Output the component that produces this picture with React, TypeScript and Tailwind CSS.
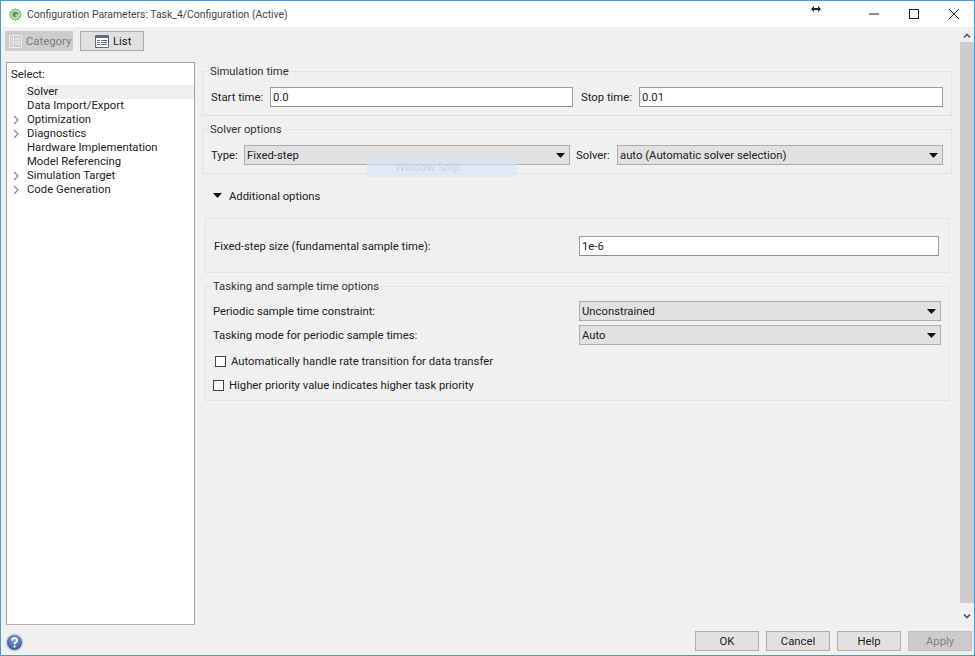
import React from "react";

const Chevron = () => (
  <svg className="w-[6px] h-[10px]" viewBox="0 0 6 10" fill="none" stroke="#8a8a8a" strokeWidth={1.2}>
    <path d="M1 1l4 4-4 4" />
  </svg>
);

const DropArrow = () => (
  <svg className="w-[9px] h-[5px]" viewBox="0 0 9 5" fill="#111">
    <path d="M0 0h9L4.5 5z" />
  </svg>
);

const treeItems = [
  { label: "Solver", selected: true },
  { label: "Data Import/Export" },
  { label: "Optimization", expand: true },
  { label: "Diagnostics", expand: true },
  { label: "Hardware Implementation" },
  { label: "Model Referencing" },
  { label: "Simulation Target", expand: true },
  { label: "Code Generation", expand: true },
];

const TextBox = ({ value, className }: { value: string; className: string }) => (
  <div className={`h-5 bg-white border border-[#a0a0a0] border-b-[#8c8c8c] flex items-center pl-[2px] text-[#222] ${className}`}>
    <span className="pt-[2px]">{value}</span>
  </div>
);

const Select = ({ value, className }: { value: string; className: string }) => (
  <div className={`h-5 bg-[#e1e1e1] border border-[#adadad] flex items-center justify-between pl-[2px] pr-[4px] text-[#222] ${className}`}>
    <span className="pt-[2px]">{value}</span>
    <DropArrow />
  </div>
);

const Button = ({ label, disabled }: { label: string; disabled?: boolean }) => (
  <div
    className={`w-16 h-5 flex items-center justify-center border pt-[2px] ${
      disabled ? "bg-[#cccccc] border-[#bfbfbf] text-[#838383]" : "bg-[#e1e1e1] border-[#adadad] text-[#222]"
    }`}
  >
    {label}
  </div>
);

const Checkbox = ({ label, className }: { label: string; className: string }) => (
  <div className={`flex items-center gap-[5px] ${className}`}>
    <div className="w-[11px] h-[11px] bg-white border border-[#444]" />
    <span className="pt-[2px]">{label}</span>
  </div>
);

export default function App() {
  return (
    <div
      className="relative w-[975px] h-[656px] overflow-hidden flex flex-col bg-[#f0f0f0] border border-[#4a9bd0] text-[11.3px] leading-4 text-[#222]"
      style={{ fontFamily: 'Roboto, sans-serif' }}
    >
      {/* Title bar */}
      <div className="h-[26px] shrink-0 bg-white flex items-center pl-2 pr-[15px]">
        <svg className="w-[13px] h-[13px] shrink-0" viewBox="0 0 13 13">
          <path d="M6.5 0l1.3 1.6 2-.6.5 2 2 .6-.6 2L13 6.5l-1.3 1.3.6 2-2 .5-.5 2-2-.5L6.5 13l-1.3-1.2-2 .5-.5-2-2-.5.6-2L0 6.5l.8-.9-.6-2 2-.6.5-2 2 .6z" fill="#8dbf86" />
          <circle cx="6.5" cy="6.5" r="3.6" fill="#4f9a56" stroke="#d9e9d6" strokeWidth="1.2" />
          <circle cx="7.5" cy="7.5" r="1.2" fill="#cfe4cc" />
        </svg>
        <span className="ml-[5px] pt-[2px] text-[10.4px] text-[#444]">Configuration Parameters: Task_4/Configuration (Active)</span>
        <svg className="w-[10px] h-[6px] ml-auto mb-[10px] mr-[48px]" viewBox="0 0 10 6" fill="#222">
          <path d="M0 3l3-3v2h4V0l3 3-3 3V4H3v2z" />
        </svg>
        <svg className="w-[10px] h-[2px] mr-[30px]" viewBox="0 0 10 1" fill="#222">
          <path d="M0 0h10v1H0z" />
        </svg>
        <div className="w-[10px] h-[10px] border border-[#222] mr-[30px]" />
        <svg className="w-[10px] h-[10px]" viewBox="0 0 10 10" stroke="#222" strokeWidth="1" fill="none">
          <path d="M0 0l10 10M10 0L0 10" />
        </svg>
      </div>

      <div className="flex-1 min-h-0 flex">
        <div className="flex-1 min-w-0 flex flex-col">
          {/* Category / List toolbar */}
          <div className="h-[35px] shrink-0 flex items-start pl-1 pt-1 gap-[7px]">
            <div className="w-[68px] h-5 bg-[#cdcdcd] flex items-center pl-[4px] gap-[4px] text-[#7e7e7e]">
              <svg className="w-[13px] h-[13px] shrink-0" viewBox="0 0 13 13" fill="none" stroke="#ececec">
                <path d="M.5.5h12v12H.5zM4.5.5v12" />
                <path d="M6 4h5M6 6.5h5M6 9h5M2 4h1.5M2 6.5h1.5M2 9h1.5" strokeWidth="1.3" />
              </svg>
              <span className="pt-[2px]">Category</span>
            </div>
            <div className="w-16 h-5 bg-[#e1e1e1] border border-[#adadad] flex items-center pl-[14px] gap-[4px] text-[#222]">
              <svg className="w-[14px] h-[13px] shrink-0" viewBox="0 0 14 13" fill="#fff" stroke="#5b6b86">
                <path d="M.5.5h13v12H.5z" />
                <path d="M1 1h12v2H1z" fill="#5b6b86" stroke="none" />
                <path d="M2 5.5h3M2 7.5h3M2 9.5h3M6 5.5h6M6 7.5h6M6 9.5h6" />
              </svg>
              <span className="pt-[2px]">List</span>
            </div>
          </div>

          <div className="flex-1 min-h-0 flex">
            {/* Tree */}
            <div className="ml-[5px] w-[189px] h-[563px] bg-white border border-[#a0a0a0] border-b-[#b0b0b0] flex flex-col pt-[4px] pl-1">
              <div className="h-[16px] mb-[2px]">Select:</div>
              {treeItems.map((item) => (
                <div key={item.label} className="h-[14px] flex items-center -ml-1">
                  <div className="w-[18px] shrink-0 flex pl-[6px]">{item.expand && <Chevron />}</div>
                  <div className={`flex-1 h-[14px] pl-[2px] flex items-center ${item.selected ? "bg-[#f0f0f0]" : ""}`}>{item.label}</div>
                </div>
              ))}
            </div>

            {/* Settings panel */}
            <div className="ml-[7px] w-[750px] flex flex-col">
              <fieldset className="h-[53px] mt-[1px] border border-[#e3e3e3] pl-2 pr-[8px]">
                <legend className="px-[1px] pt-[1px] -ml-[2px] h-4 text-[#333]">Simulation time</legend>
                <div className="flex items-center pt-2">
                  <span className="w-[59px] pt-[2px]">Start time:</span>
                  <TextBox value="0.0" className="w-[303px]" />
                  <span className="ml-[8px] w-[58px] pt-[2px]">Stop time:</span>
                  <TextBox value="0.01" className="w-[304px]" />
                </div>
              </fieldset>

              <fieldset className="h-[53px] mt-[5px] border border-[#e3e3e3] pl-2 pr-[8px]">
                <legend className="px-[1px] pt-[1px] -ml-[2px] h-4 text-[#333]">Solver options</legend>
                <div className="flex items-center pt-2">
                  <span className="w-[33px] pt-[2px]">Type:</span>
                  <Select value="Fixed-step" className="w-[326px]" />
                  <span className="ml-[6px] w-[41px] pt-[2px]">Solver:</span>
                  <Select value="auto (Automatic solver selection)" className="w-[326px]" />
                </div>
              </fieldset>

              <div className="h-[44px] flex items-center pl-[11px] gap-[7px] pt-[1px]">
                <div className="pb-[3px]">
                  <DropArrow />
                </div>
                <span>Additional options</span>
              </div>

              <div className="ml-[3px] w-[744px] h-[55px] border border-[#e3e3e3] flex items-center pl-2 pr-[9px] justify-between">
                <span className="pt-[2px]">Fixed-step size (fundamental sample time):</span>
                <TextBox value="1e-6" className="w-[360px]" />
              </div>

              <fieldset className="ml-[3px] w-[744px] h-[123px] mt-[5px] border border-[#e3e3e3] pl-[7px] pr-[7px]">
                <legend className="px-[1px] pt-[1px] -ml-[1px] h-4 text-[#333]">Tasking and sample time options</legend>
                <div className="flex items-center justify-between pt-[7px]">
                  <span className="pt-[2px]">Periodic sample time constraint:</span>
                  <Select value="Unconstrained" className="w-[362px]" />
                </div>
                <div className="flex items-center justify-between mt-[4px]">
                  <span className="pt-[2px]">Tasking mode for periodic sample times:</span>
                  <Select value="Auto" className="w-[362px]" />
                </div>
                <Checkbox label="Automatically handle rate transition for data transfer" className="mt-[7px] ml-[2px] h-[18px]" />
                <Checkbox label="Higher priority value indicates higher task priority" className="mt-[6px] h-[18px]" />
              </fieldset>
            </div>
          </div>
        </div>

        {/* Scrollbar */}
        <div className="w-[14px] shrink-0 flex flex-col items-center h-[597px]">
          <svg className="w-[8px] h-[5px] mt-[6px] mb-[4px]" viewBox="0 0 8 5" fill="none" stroke="#555" strokeWidth="1.6">
            <path d="M1 4.5l3-3 3 3" />
          </svg>
          <div className="w-full flex-1 bg-[#cdcdcd]" />
          <svg className="w-[8px] h-[5px] mt-[11px] mb-[5px]" viewBox="0 0 8 5" fill="none" stroke="#555" strokeWidth="1.6">
            <path d="M1 .5l3 3 3-3" />
          </svg>
        </div>
      </div>

      {/* Bottom buttons */}
      <div className="h-[30px] shrink-0 flex items-start pl-1 pr-[2px] pt-[6px]">
        <svg className="w-[19px] h-[19px] mt-[2px]" viewBox="0 0 19 19">
          <defs>
            <radialGradient id="help" cx="50%" cy="35%" r="70%">
              <stop offset="0%" stopColor="#8ea7d8" />
              <stop offset="100%" stopColor="#2f4f96" />
            </radialGradient>
          </defs>
          <circle cx="9.5" cy="9.5" r="9" fill="#c9d2df" />
          <circle cx="9.5" cy="9.5" r="7.5" fill="url(#help)" />
          <path d="M7 7.4c0-3 5-3 5 0 0 1.9-2.4 1.8-2.4 3.8" fill="none" stroke="#fff" strokeWidth="1.7" />
          <circle cx="9.6" cy="13.6" r="1.1" fill="#fff" />
        </svg>
        <div className="ml-auto flex gap-[7px]">
          <Button label="OK" />
          <Button label="Cancel" />
          <Button label="Help" />
          <Button label="Apply" disabled />
        </div>
      </div>

      {/* Snipping tool ghost label */}
      <div className="absolute left-[365px] top-[157px] w-[151px] h-[19px] bg-[#d4e6f7]/60 flex items-center justify-center text-[#cdd4da] pr-[28px]">
        Window Snip
      </div>
    </div>
  );
}
